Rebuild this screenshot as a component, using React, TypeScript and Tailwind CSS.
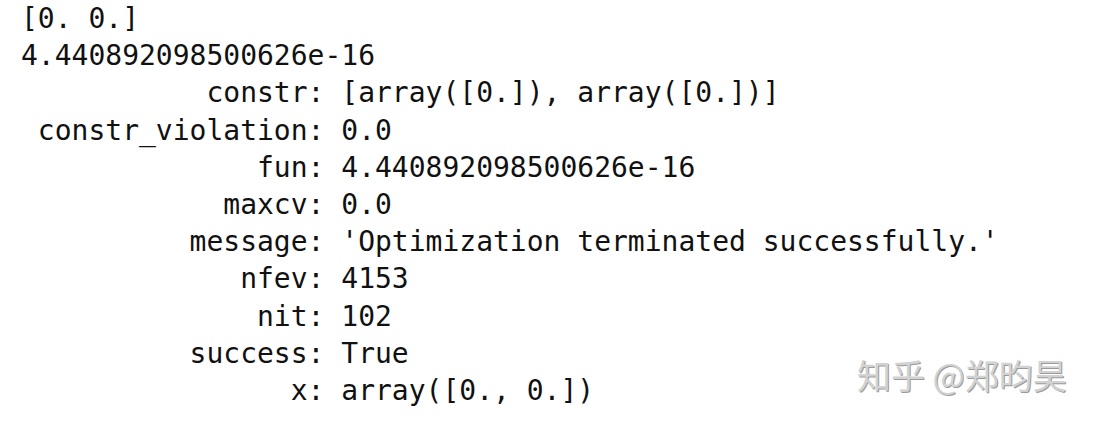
const lines = [
  '[0. 0.]',
  '4.440892098500626e-16',
  '           constr: [array([0.]), array([0.])]',
  ' constr_violation: 0.0',
  '              fun: 4.440892098500626e-16',
  '            maxcv: 0.0',
  "          message: 'Optimization terminated successfully.'",
  '             nfev: 4153',
  '              nit: 102',
  '          success: True',
  '                x: array([0., 0.])',
]

export default function App() {
  return (
    <div className="relative w-[1095px] h-[421px] overflow-hidden bg-white">
      <pre className="w-fit pl-[21px] pt-0 font-['DejaVu_Sans_Mono',monospace] text-[28px] leading-[37.2px] text-[#111] whitespace-pre">
        {lines.join('\n')}
      </pre>
      <div className="absolute left-[857px] top-[355px] font-['Noto_Sans_CJK_SC',sans-serif] text-[34px] leading-[40px] text-[#d2d2d2] [text-shadow:1px_1px_0_#9a9a9a]">
        知乎 @郑昀昊
      </div>
    </div>
  )
}
